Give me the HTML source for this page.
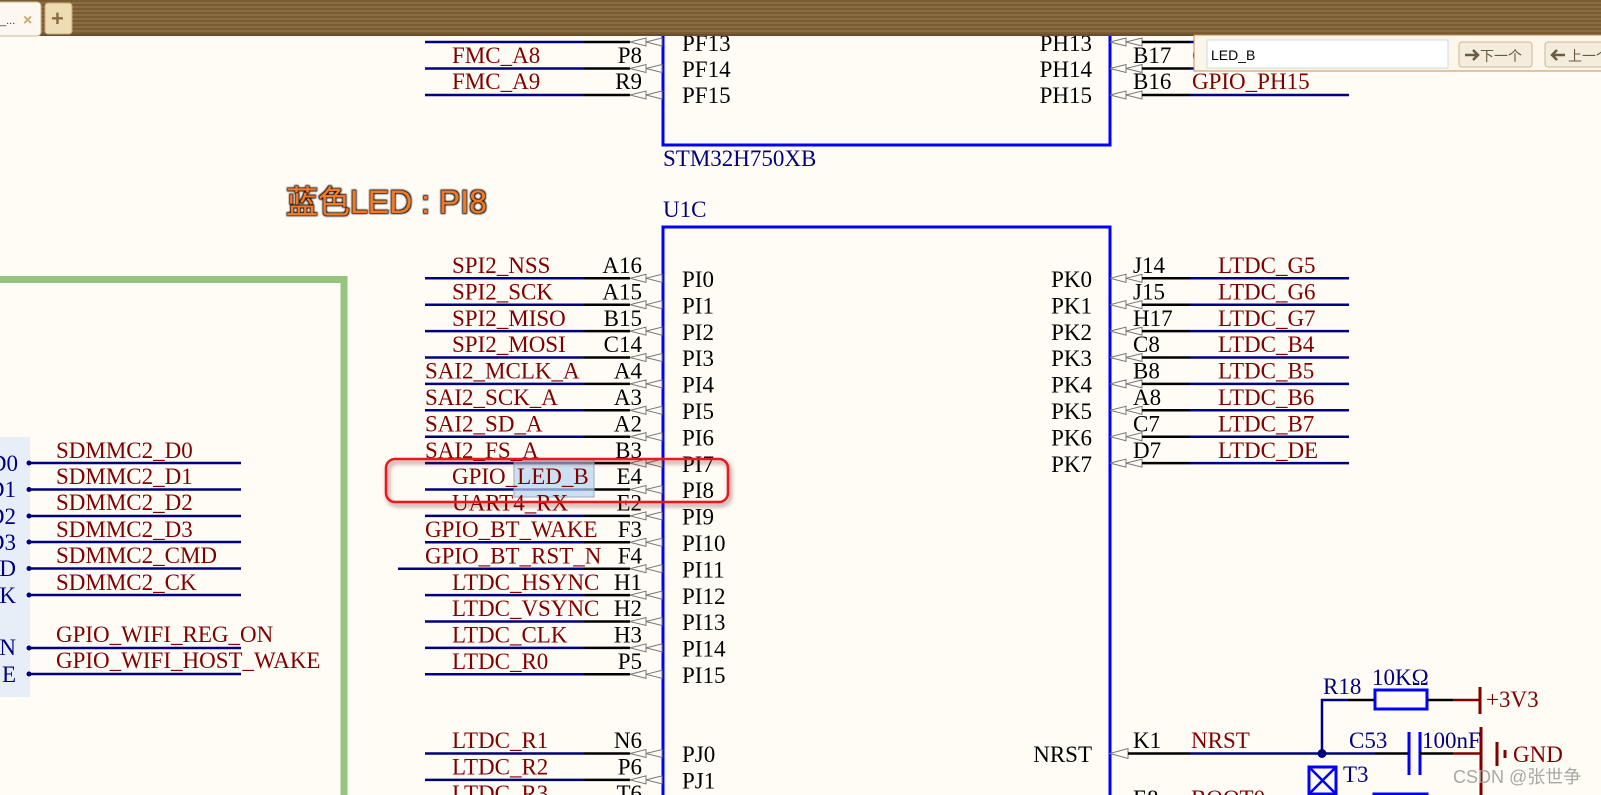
<!DOCTYPE html>
<html><head><meta charset="utf-8"><style>
html,body{margin:0;padding:0;width:1601px;height:795px;overflow:hidden;background:#fffcf6}
svg{display:block;overflow:hidden}
.n{font-family:"Liberation Serif",serif;font-size:23px;fill:#800000}
.p{font-family:"Liberation Serif",serif;font-size:23px;fill:#000}
.b{font-family:"Liberation Serif",serif;font-size:23px;fill:#000080}
.w{stroke:#000080;stroke-width:2.5}
.k{stroke:#000;stroke-width:2.5}
.a{fill:none;stroke:#777;stroke-width:1}
</style></head><body>
<svg width="1601" height="795" viewBox="0 0 1601 795" xmlns="http://www.w3.org/2000/svg">
<defs>
<pattern id="st" width="4" height="4" patternUnits="userSpaceOnUse"><rect width="4" height="4" fill="#8a6c42"/><rect width="4" height="2" fill="#7a5c34"/></pattern>
<g id="la"><path class="a" d="M-32,0 l16,-4 v8 z M-16,0 l16,-4 v8 z"/></g>
<g id="ra"><path class="a" d="M0,0 l16,-4 v8 z M16,0 l16,-4 v8 z"/></g>
<filter id="gl"><feMorphology operator="dilate" radius="0.8" in="SourceAlpha" result="d"/><feGaussianBlur in="d" stdDeviation="0.8" result="b"/><feFlood flood-color="#1a0a00"/><feComposite in2="b" operator="in" result="s"/><feMerge><feMergeNode in="s"/><feMergeNode in="SourceGraphic"/></feMerge></filter>
<filter id="sh"><feGaussianBlur stdDeviation="2"/></filter>
</defs>
<rect width="1601" height="795" fill="#fffcf6"/>

<rect x="-10" y="279.5" width="354" height="600" fill="none" stroke="#96c47e" stroke-width="7"/>
<rect x="0" y="437" width="30" height="260" fill="#e8eef8"/>
<g class="b" text-anchor="end" fill="#1a2a6a">
<text x="18" y="471">D0</text><text x="16" y="497">D1</text><text x="16" y="524">D2</text><text x="16" y="550">D3</text><text x="16" y="576">D</text><text x="16" y="603">K</text><text x="16" y="655">N</text><text x="16" y="682">E</text>
</g>
<g class="w">
<line x1="28" y1="463" x2="241" y2="463"/><line x1="28" y1="489.5" x2="241" y2="489.5"/><line x1="28" y1="516" x2="241" y2="516"/><line x1="28" y1="542" x2="241" y2="542"/><line x1="28" y1="568.5" x2="241" y2="568.5"/><line x1="28" y1="595" x2="241" y2="595"/><line x1="28" y1="648" x2="241" y2="648"/><line x1="28" y1="674" x2="241" y2="674"/>
</g>
<g fill="#000080"><circle cx="29" cy="463" r="2.5"/><circle cx="29" cy="489.5" r="2.5"/><circle cx="29" cy="516" r="2.5"/><circle cx="29" cy="542" r="2.5"/><circle cx="29" cy="568.5" r="2.5"/><circle cx="29" cy="595" r="2.5"/><circle cx="29" cy="648" r="2.5"/><circle cx="29" cy="674" r="2.5"/></g>
<g class="n">
<text x="56" y="458">SDMMC2_D0</text><text x="56" y="484">SDMMC2_D1</text><text x="56" y="510">SDMMC2_D2</text><text x="56" y="537">SDMMC2_D3</text><text x="56" y="563">SDMMC2_CMD</text><text x="56" y="590">SDMMC2_CK</text><text x="56" y="642">GPIO_WIFI_REG_ON</text><text x="56" y="668">GPIO_WIFI_HOST_WAKE</text>
</g>

<path d="M663,30 V145 H1110 V30" fill="none" stroke="#0000ff" stroke-width="3"/>
<text class="b" x="663" y="166">STM32H750XB</text>
<g class="w"><line x1="425" y1="42" x2="584" y2="42"/><line x1="425" y1="68.5" x2="584" y2="68.5"/><line x1="425" y1="95" x2="584" y2="95"/></g>
<g class="k"><line x1="584" y1="42" x2="630" y2="42"/><line x1="584" y1="68.5" x2="630" y2="68.5"/><line x1="584" y1="95" x2="630" y2="95"/></g>
<use href="#la" x="662" y="42"/><use href="#la" x="662" y="68.5"/><use href="#la" x="662" y="95"/>
<g class="n"><text x="452" y="63">FMC_A8</text><text x="452" y="89">FMC_A9</text></g>
<g class="p" text-anchor="end"><text x="642" y="63">P8</text><text x="642" y="89">R9</text></g>
<g class="p"><text x="682" y="51">PF13</text><text x="682" y="77">PF14</text><text x="682" y="103">PF15</text></g>
<g class="p" text-anchor="end"><text x="1092" y="51">PH13</text><text x="1092" y="77">PH14</text><text x="1092" y="103">PH15</text></g>
<use href="#ra" x="1110" y="42"/><use href="#ra" x="1110" y="68.5"/><use href="#ra" x="1110" y="95"/>
<g class="k"><line x1="1142" y1="42" x2="1190" y2="42"/><line x1="1142" y1="68.5" x2="1190" y2="68.5"/><line x1="1142" y1="95" x2="1190" y2="95"/></g>
<g class="w"><line x1="1190" y1="42" x2="1349" y2="42"/><line x1="1190" y1="68.5" x2="1349" y2="68.5"/><line x1="1190" y1="95" x2="1349" y2="95"/></g>
<g class="p"><text x="1133" y="63">B17</text><text x="1133" y="89">B16</text></g>
<g class="n"><text x="1192" y="63">GPIO_PH14</text><text x="1192" y="89">GPIO_PH15</text></g>

<text x="286" y="213" font-family="Liberation Sans,'Noto Sans CJK SC',sans-serif" font-size="32" fill="#f07a2a" filter="url(#gl)">蓝色LED : PI8</text>

<text class="b" x="663" y="217">U1C</text>
<path d="M663,800 V227 H1110 V800" fill="none" stroke="#0000ff" stroke-width="3"/>

<g class="w">
<line x1="425" y1="278.3" x2="584" y2="278.3"/><line x1="425" y1="304.7" x2="584" y2="304.7"/><line x1="425" y1="331.1" x2="584" y2="331.1"/><line x1="425" y1="357.5" x2="584" y2="357.5"/><line x1="425" y1="383.9" x2="584" y2="383.9"/><line x1="425" y1="410.3" x2="584" y2="410.3"/><line x1="425" y1="436.7" x2="584" y2="436.7"/><line x1="425" y1="463.1" x2="584" y2="463.1"/><line x1="425" y1="489.5" x2="584" y2="489.5"/><line x1="425" y1="515.9" x2="584" y2="515.9"/><line x1="425" y1="542.3" x2="584" y2="542.3"/><line x1="398" y1="568.7" x2="584" y2="568.7"/><line x1="425" y1="595.1" x2="584" y2="595.1"/><line x1="425" y1="621.5" x2="584" y2="621.5"/><line x1="425" y1="647.9" x2="584" y2="647.9"/><line x1="425" y1="674.3" x2="584" y2="674.3"/><line x1="425" y1="753.5" x2="584" y2="753.5"/><line x1="425" y1="779.9" x2="584" y2="779.9"/>
</g>
<g class="k">
<line x1="584" y1="278.3" x2="630" y2="278.3"/><line x1="584" y1="304.7" x2="630" y2="304.7"/><line x1="584" y1="331.1" x2="630" y2="331.1"/><line x1="584" y1="357.5" x2="630" y2="357.5"/><line x1="584" y1="383.9" x2="630" y2="383.9"/><line x1="584" y1="410.3" x2="630" y2="410.3"/><line x1="584" y1="436.7" x2="630" y2="436.7"/><line x1="584" y1="463.1" x2="630" y2="463.1"/><line x1="584" y1="489.5" x2="630" y2="489.5"/><line x1="584" y1="515.9" x2="630" y2="515.9"/><line x1="584" y1="542.3" x2="630" y2="542.3"/><line x1="584" y1="568.7" x2="630" y2="568.7"/><line x1="584" y1="595.1" x2="630" y2="595.1"/><line x1="584" y1="621.5" x2="630" y2="621.5"/><line x1="584" y1="647.9" x2="630" y2="647.9"/><line x1="584" y1="674.3" x2="630" y2="674.3"/><line x1="584" y1="753.5" x2="630" y2="753.5"/><line x1="584" y1="779.9" x2="630" y2="779.9"/>
</g>
<use href="#la" x="662" y="278.3"/><use href="#la" x="662" y="304.7"/><use href="#la" x="662" y="331.1"/><use href="#la" x="662" y="357.5"/><use href="#la" x="662" y="383.9"/><use href="#la" x="662" y="410.3"/><use href="#la" x="662" y="436.7"/><use href="#la" x="662" y="463.1"/><use href="#la" x="662" y="489.5"/><use href="#la" x="662" y="515.9"/><use href="#la" x="662" y="542.3"/><use href="#la" x="662" y="568.7"/><use href="#la" x="662" y="595.1"/><use href="#la" x="662" y="621.5"/><use href="#la" x="662" y="647.9"/><use href="#la" x="662" y="674.3"/><use href="#la" x="662" y="753.5"/><use href="#la" x="662" y="779.9"/>
<rect x="514" y="459" width="80" height="38" fill="#b8d4f0" fill-opacity="0.7" stroke="#9ab" stroke-width="1"/>
<g class="n">
<text x="452" y="273">SPI2_NSS</text><text x="452" y="299.5">SPI2_SCK</text><text x="452" y="326">SPI2_MISO</text><text x="452" y="352">SPI2_MOSI</text><text x="425" y="378.5">SAI2_MCLK_A</text><text x="425" y="405">SAI2_SCK_A</text><text x="425" y="431.5">SAI2_SD_A</text><text x="425" y="458">SAI2_FS_A</text><text x="452" y="484">GPIO_LED_B</text><text x="452" y="510.5">UART4_RX</text><text x="425" y="537">GPIO_BT_WAKE</text><text x="425" y="563.5">GPIO_BT_RST_N</text><text x="452" y="590">LTDC_HSYNC</text><text x="452" y="616">LTDC_VSYNC</text><text x="452" y="642.5">LTDC_CLK</text><text x="452" y="669">LTDC_R0</text><text x="452" y="748">LTDC_R1</text><text x="452" y="774.5">LTDC_R2</text><text x="452" y="801">LTDC_R3</text>
</g>
<g class="p" text-anchor="end">
<text x="642" y="273">A16</text><text x="642" y="299.5">A15</text><text x="642" y="326">B15</text><text x="642" y="352">C14</text><text x="642" y="378.5">A4</text><text x="642" y="405">A3</text><text x="642" y="431.5">A2</text><text x="642" y="458">B3</text><text x="642" y="484">E4</text><text x="642" y="510.5">E2</text><text x="642" y="537">F3</text><text x="642" y="563.5">F4</text><text x="642" y="590">H1</text><text x="642" y="616">H2</text><text x="642" y="642.5">H3</text><text x="642" y="669">P5</text><text x="642" y="748">N6</text><text x="642" y="774.5">P6</text><text x="642" y="801">T6</text>
</g>
<g class="p">
<text x="682" y="287">PI0</text><text x="682" y="313.5">PI1</text><text x="682" y="340">PI2</text><text x="682" y="366">PI3</text><text x="682" y="392.5">PI4</text><text x="682" y="419">PI5</text><text x="682" y="445.5">PI6</text><text x="682" y="472">PI7</text><text x="682" y="498">PI8</text><text x="682" y="524.5">PI9</text><text x="682" y="551">PI10</text><text x="682" y="577.5">PI11</text><text x="682" y="604">PI12</text><text x="682" y="630">PI13</text><text x="682" y="656.5">PI14</text><text x="682" y="683">PI15</text><text x="682" y="762">PJ0</text><text x="682" y="788.5">PJ1</text>
</g>
<rect x="387" y="460" width="342" height="43" rx="9" fill="none" stroke="#600" stroke-opacity="0.35" stroke-width="4" filter="url(#sh)" transform="translate(1,2)"/>
<rect x="386" y="459" width="342" height="43" rx="9" fill="none" stroke="#e8181c" stroke-width="2.5"/>

<g class="p" text-anchor="end">
<text x="1092" y="287">PK0</text><text x="1092" y="313.5">PK1</text><text x="1092" y="340">PK2</text><text x="1092" y="366">PK3</text><text x="1092" y="392.5">PK4</text><text x="1092" y="419">PK5</text><text x="1092" y="445.5">PK6</text><text x="1092" y="472">PK7</text><text x="1092" y="762">NRST</text>
</g>
<use href="#ra" x="1110" y="278.3"/><use href="#ra" x="1110" y="304.7"/><use href="#ra" x="1110" y="331.1"/><use href="#ra" x="1110" y="357.5"/><use href="#ra" x="1110" y="383.9"/><use href="#ra" x="1110" y="410.3"/><use href="#ra" x="1110" y="436.7"/><use href="#ra" x="1110" y="463.1"/>
<path class="a" d="M1110,753.5 l18,-5 v10 z"/>
<g class="k">
<line x1="1142" y1="278.3" x2="1190" y2="278.3"/><line x1="1142" y1="304.7" x2="1190" y2="304.7"/><line x1="1142" y1="331.1" x2="1190" y2="331.1"/><line x1="1142" y1="357.5" x2="1190" y2="357.5"/><line x1="1142" y1="383.9" x2="1190" y2="383.9"/><line x1="1142" y1="410.3" x2="1190" y2="410.3"/><line x1="1142" y1="436.7" x2="1190" y2="436.7"/><line x1="1142" y1="463.1" x2="1190" y2="463.1"/><line x1="1128" y1="753.5" x2="1190" y2="753.5"/>
</g>
<g class="w">
<line x1="1190" y1="278.3" x2="1349" y2="278.3"/><line x1="1190" y1="304.7" x2="1349" y2="304.7"/><line x1="1190" y1="331.1" x2="1349" y2="331.1"/><line x1="1190" y1="357.5" x2="1349" y2="357.5"/><line x1="1190" y1="383.9" x2="1349" y2="383.9"/><line x1="1190" y1="410.3" x2="1349" y2="410.3"/><line x1="1190" y1="436.7" x2="1349" y2="436.7"/><line x1="1190" y1="463.1" x2="1349" y2="463.1"/><line x1="1190" y1="753.5" x2="1375" y2="753.5"/>
</g>
<g class="p">
<text x="1133" y="273">J14</text><text x="1133" y="299.5">J15</text><text x="1133" y="326">H17</text><text x="1133" y="352">C8</text><text x="1133" y="378.5">B8</text><text x="1133" y="405">A8</text><text x="1133" y="431.5">C7</text><text x="1133" y="458">D7</text><text x="1133" y="748">K1</text><text x="1133" y="806">E8</text>
</g>
<g class="n">
<text x="1218" y="273">LTDC_G5</text><text x="1218" y="299.5">LTDC_G6</text><text x="1218" y="326">LTDC_G7</text><text x="1218" y="352">LTDC_B4</text><text x="1218" y="378.5">LTDC_B5</text><text x="1218" y="405">LTDC_B6</text><text x="1218" y="431.5">LTDC_B7</text><text x="1218" y="458">LTDC_DE</text><text x="1191" y="748">NRST</text><text x="1191" y="806">BOOT0</text>
</g>

<path d="M1322,753.5 V700 H1348" fill="none" class="w"/>
<circle cx="1322" cy="753.5" r="4.5" fill="#000080"/>
<line x1="1348" y1="700" x2="1374" y2="700" class="k"/>
<rect x="1375" y="690" width="52" height="19" fill="none" stroke="#0000ff" stroke-width="3"/>
<line x1="1427" y1="700" x2="1453" y2="700" class="k"/>
<line x1="1453" y1="700" x2="1480" y2="700" stroke="#800000" stroke-width="2.5"/>
<line x1="1480" y1="687" x2="1480" y2="714" stroke="#800000" stroke-width="3"/>
<text class="n" x="1486" y="707">+3V3</text>
<text class="b" x="1323" y="694">R18</text>
<text class="b" x="1372" y="685">10KΩ</text>
<line x1="1375" y1="753.5" x2="1408" y2="753.5" class="k"/>
<line x1="1409" y1="732" x2="1409" y2="775" stroke="#0000ff" stroke-width="3"/>
<line x1="1420" y1="732" x2="1420" y2="775" stroke="#0000ff" stroke-width="3"/>
<line x1="1420" y1="753.5" x2="1453" y2="753.5" class="k"/>
<line x1="1453" y1="753.5" x2="1480" y2="753.5" stroke="#800000" stroke-width="2.5"/>
<line x1="1481" y1="727" x2="1481" y2="795" stroke="#800000" stroke-width="3"/>
<line x1="1497" y1="742" x2="1497" y2="766" stroke="#800000" stroke-width="3"/>
<line x1="1505" y1="750" x2="1505" y2="758" stroke="#800000" stroke-width="3"/>
<text class="n" x="1513" y="762">GND</text>
<text class="b" x="1349" y="748">C53</text>
<text class="b" x="1422" y="748">100nF</text>
<rect x="1309" y="767" width="27" height="27" fill="none" stroke="#0000ff" stroke-width="3"/>
<path d="M1309,767 L1336,794 M1336,767 L1309,794" stroke="#0000ff" stroke-width="2.5"/>
<text class="b" x="1343" y="782">T3</text>
<rect x="1374" y="794" width="53" height="10" fill="none" stroke="#0000ff" stroke-width="3"/>
<text x="1453" y="783" font-family="Liberation Sans,'Noto Sans CJK SC',sans-serif" font-size="18" fill="#999" fill-opacity="0.85">CSDN @张世争</text>

<rect x="0" y="0" width="1601" height="36" fill="url(#st)"/>
<rect x="0" y="34" width="1601" height="2" fill="#6b4e28"/>
<rect x="-6" y="2" width="47" height="34" rx="4" fill="#fcf8f0" stroke="#c8b898"/>
<text x="0" y="24" font-family="Liberation Sans,sans-serif" font-size="11" fill="#333">_...</text>
<text x="23" y="25" font-family="Liberation Sans,sans-serif" font-size="16" fill="#c8a870" font-weight="bold">×</text>
<rect x="45" y="3" width="27" height="31" rx="3" fill="#eedcb4" stroke="#c8a870"/>
<text x="51" y="26" font-family="Liberation Sans,sans-serif" font-size="22" fill="#8a6c42" font-weight="bold">+</text>

<rect x="1194" y="35" width="420" height="36" fill="#fdf6ea" stroke="#c89050" stroke-width="1"/>
<rect x="1207" y="40" width="241" height="28" fill="#fff" stroke="#d0d8e0"/>
<text x="1211" y="60" font-family="Liberation Sans,sans-serif" font-size="14" fill="#000">LED_B</text>
<rect x="1459" y="42" width="73" height="25" rx="3" fill="#f4ecdc" stroke="#c8b898"/>
<path d="M1465,55 H1478 M1473,50 L1478,55 L1473,60" fill="none" stroke="#6a5a40" stroke-width="2.5"/>
<text x="1480" y="61" font-family="'Noto Sans CJK SC',sans-serif" font-size="14" fill="#6a5a40">下一个</text>
<rect x="1545" y="42" width="70" height="25" rx="3" fill="#f4ecdc" stroke="#c8b898"/>
<path d="M1565,55 H1552 M1557,50 L1552,55 L1557,60" fill="none" stroke="#6a5a40" stroke-width="2.5"/>
<text x="1568" y="61" font-family="'Noto Sans CJK SC',sans-serif" font-size="14" fill="#6a5a40">上一个</text>
</svg>
</body></html>
